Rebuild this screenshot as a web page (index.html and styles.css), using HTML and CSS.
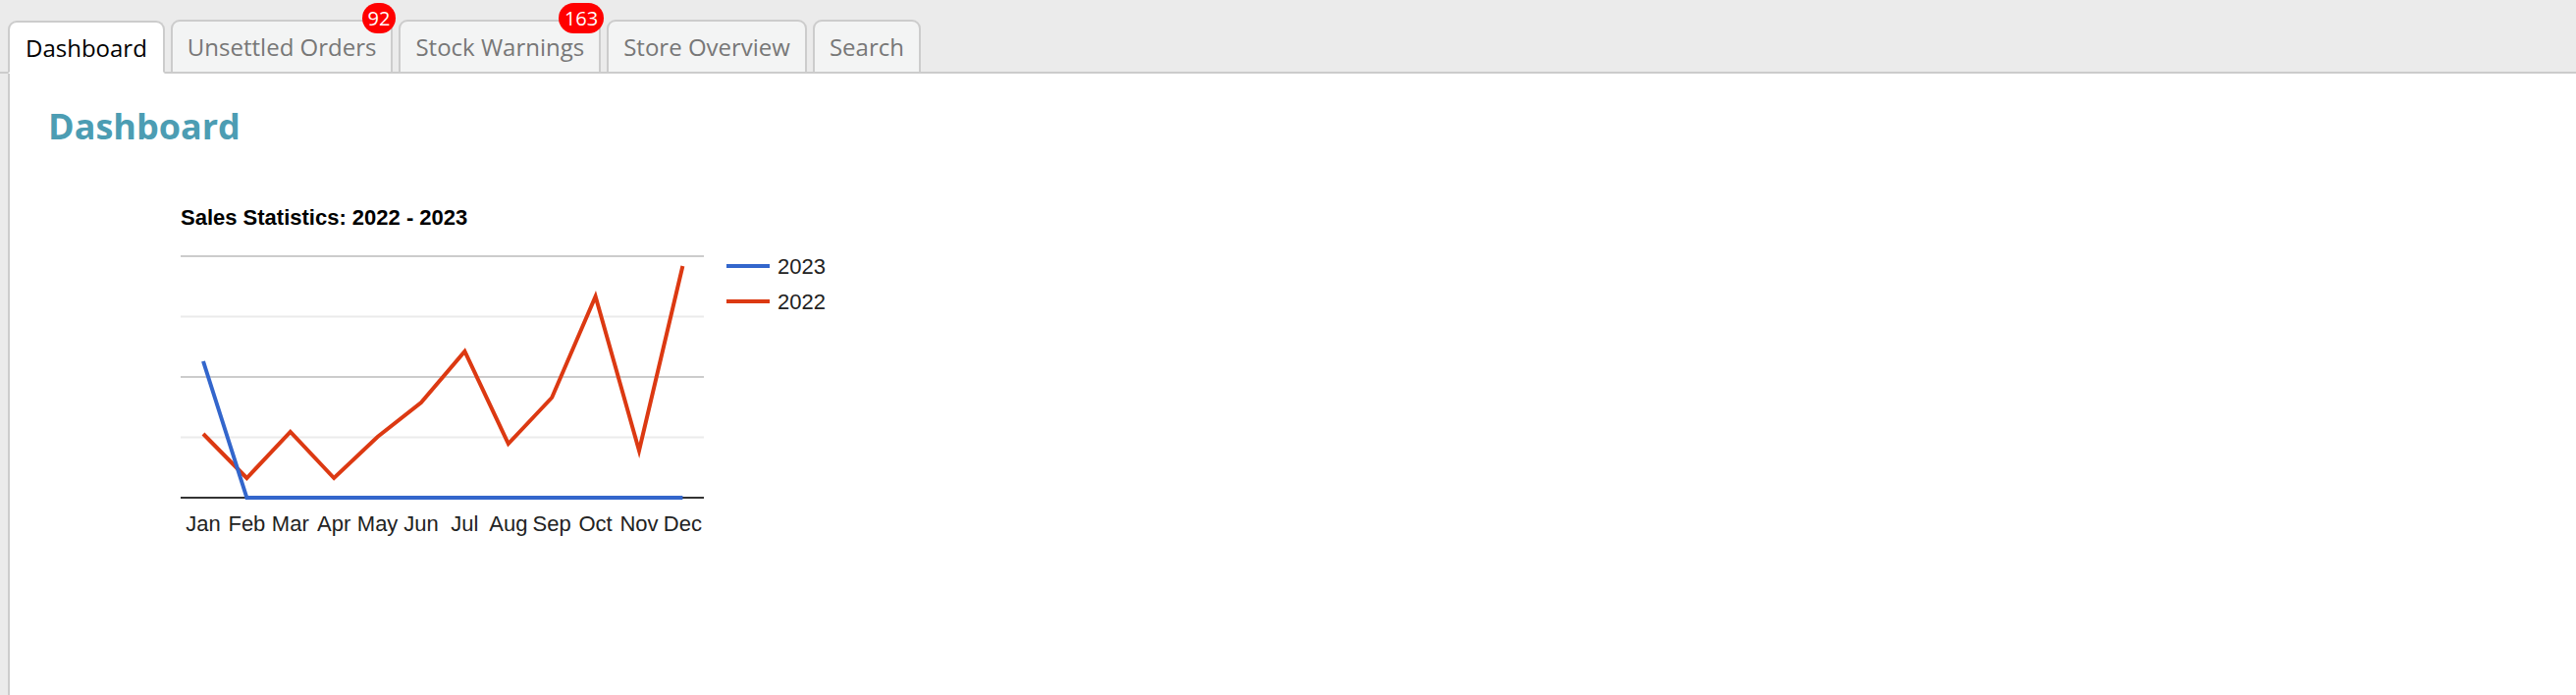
FILE: index.html
```html
<!DOCTYPE html>
<html lang="en">
<head>
<meta charset="utf-8">
<title>Dashboard</title>
<link rel="stylesheet" href="styles.css">
</head>
<body>
<div class="page">
  <nav class="tabs">
    <div class="tab active">Dashboard</div>
    <div class="tab">Unsettled Orders<span class="badge">92</span></div>
    <div class="tab">Stock Warnings<span class="badge">163</span></div>
    <div class="tab">Store Overview</div>
    <div class="tab">Search</div>
  </nav>
  <main class="content">
    <h1 class="heading">Dashboard</h1>
    <div class="chart">
      <svg width="900" height="370" viewBox="0 0 900 370" xmlns="http://www.w3.org/2000/svg">
        <text x="24" y="39" class="chart-title">Sales Statistics: 2022 - 2023</text>
        <line x1="24" y1="71" x2="557" y2="71" stroke="#cccccc" stroke-width="2"/>
        <line x1="24" y1="132.5" x2="557" y2="132.5" stroke="#ebebeb" stroke-width="2"/>
        <line x1="24" y1="194" x2="557" y2="194" stroke="#cccccc" stroke-width="2"/>
        <line x1="24" y1="255.5" x2="557" y2="255.5" stroke="#ebebeb" stroke-width="2"/>
        <line x1="24" y1="317" x2="557" y2="317" stroke="#333333" stroke-width="2"/>
        <polyline fill="none" stroke="#dc3912" stroke-width="4" stroke-linejoin="miter"
          points="47,252 91.4,297 135.8,250 180.2,297 224.6,255 269,220 313.4,168 357.8,262 402.2,215 446.6,112 491,269 535.4,81"/>
        <polyline fill="none" stroke="#3366cc" stroke-width="4"
          points="47,178 91.4,317 135.8,317 180.2,317 224.6,317 269,317 313.4,317 357.8,317 402.2,317 446.6,317 491,317 535.4,317"/>
        <line x1="580" y1="81" x2="624" y2="81" stroke="#3366cc" stroke-width="4"/>
        <text x="632" y="89" class="legend">2023</text>
        <line x1="580" y1="117" x2="624" y2="117" stroke="#dc3912" stroke-width="4"/>
        <text x="632" y="125" class="legend">2022</text>
        <g class="axis">
          <text x="47" y="351">Jan</text>
          <text x="91.4" y="351">Feb</text>
          <text x="135.8" y="351">Mar</text>
          <text x="180.2" y="351">Apr</text>
          <text x="224.6" y="351">May</text>
          <text x="269" y="351">Jun</text>
          <text x="313.4" y="351">Jul</text>
          <text x="357.8" y="351">Aug</text>
          <text x="402.2" y="351">Sep</text>
          <text x="446.6" y="351">Oct</text>
          <text x="491" y="351">Nov</text>
          <text x="535.4" y="351">Dec</text>
        </g>
      </svg>
    </div>
  </main>
</div>
</body>
</html>
```
FILE: styles.css
```css
* { box-sizing: border-box; }
html, body { margin: 0; padding: 0; }
body {
  background: #ebebeb;
  font-family: "Open Sans", "Liberation Sans", sans-serif;
}
.page {
  display: flex;
  flex-direction: column;
  min-height: 100vh;
}
.tabs {
  display: flex;
  align-items: flex-end;
  gap: 6px;
  height: 75px;
  padding-left: 8px;
  border-bottom: 2px solid #cccccc;
}
.tab {
  position: relative;
  height: 55px;
  margin-bottom: -2px;
  padding: 0 15px;
  border: 2px solid #cccccc;
  border-radius: 9px 9px 0 0;
  background: #f3f4f4;
  color: #777777;
  font-size: 24px;
  line-height: 51px;
  white-space: nowrap;
}
.tab.active {
  background: #ffffff;
  color: #000000;
  border-bottom-color: #ffffff;
  height: 54px;
  padding: 0 16px;
}
.badge {
  position: absolute;
  top: -19px;
  right: -5px;
  height: 31px;
  padding: 0 6px;
  border-radius: 16px;
  background: #ff0000;
  color: #ffffff;
  font-size: 20px;
  line-height: 31px;
}
.content {
  flex: 1;
  margin-left: 8px;
  border-left: 2px solid #cccccc;
  background: #ffffff;
  padding-top: 30px;
}
.heading {
  margin: 0;
  padding-left: 39px;
  font-size: 36px;
  line-height: 48px;
  font-weight: 700;
  color: #4c9db3;
}
.chart {
  margin-top: 37px;
  margin-left: 150px;
}
.chart svg { display: block; }
.chart-title {
  font-family: "Liberation Sans", Arial, sans-serif;
  font-size: 22px;
  font-weight: 700;
  fill: #000000;
}
.legend {
  font-family: "Liberation Sans", Arial, sans-serif;
  font-size: 22px;
  fill: #222222;
}
.axis text {
  font-family: "Liberation Sans", Arial, sans-serif;
  font-size: 22px;
  fill: #222222;
  text-anchor: middle;
}
```
